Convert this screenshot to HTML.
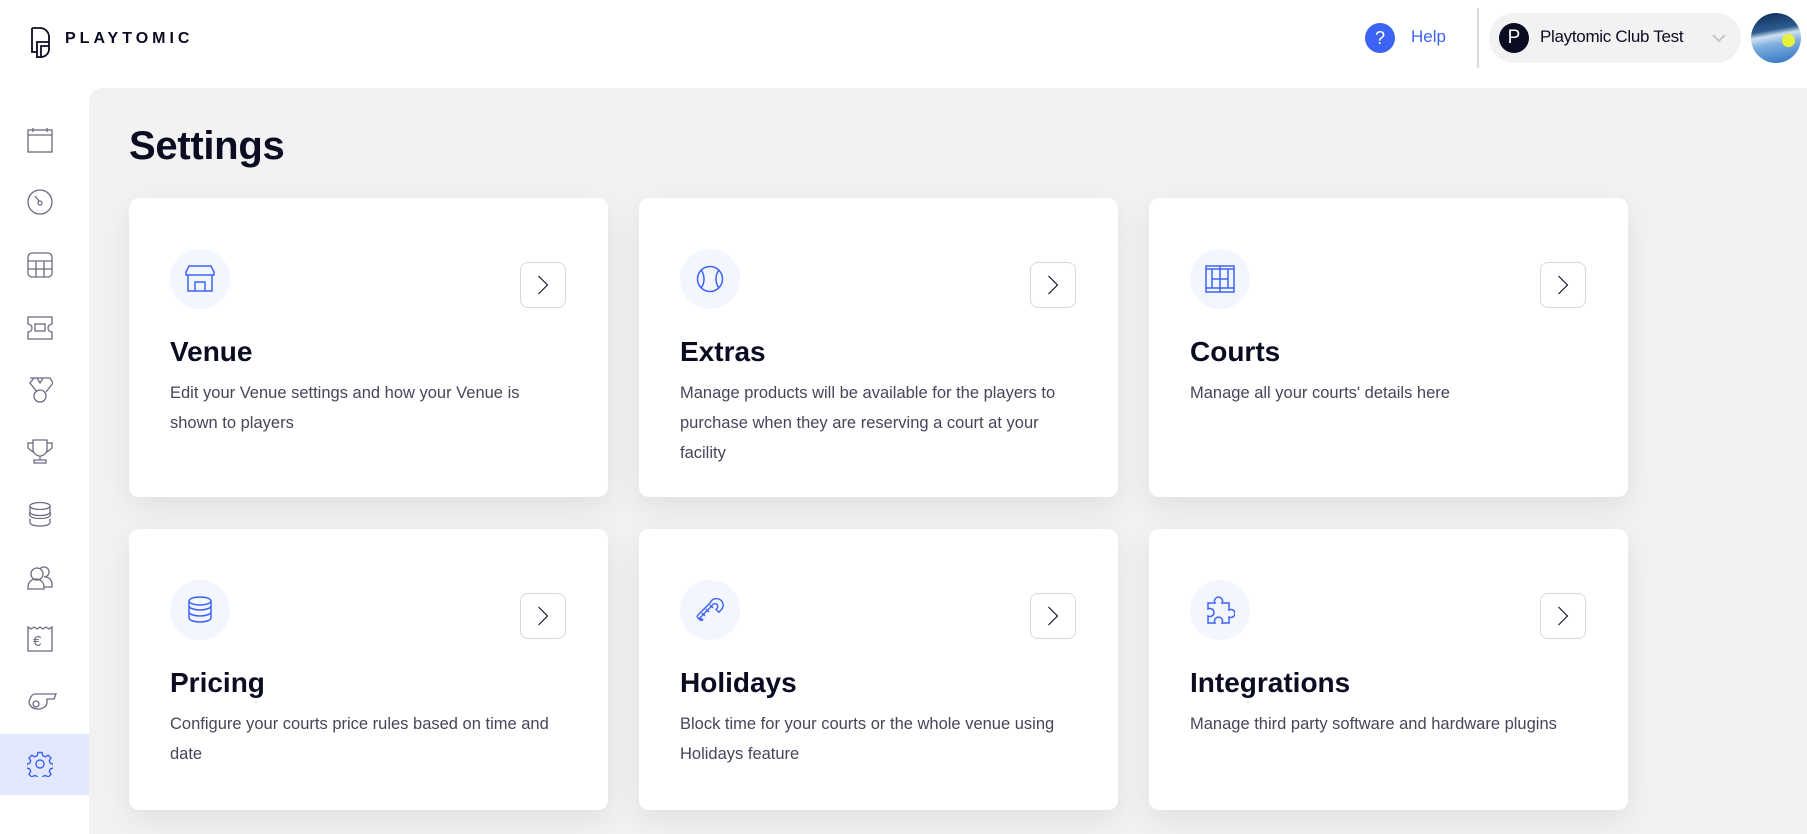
<!DOCTYPE html>
<html><head><meta charset="utf-8"><style>
*{margin:0;padding:0;box-sizing:border-box}
body{width:1807px;height:834px;overflow:hidden;background:#fff;font-family:"Liberation Sans",sans-serif;color:#0b0b22;position:relative}
.abs{position:absolute}
.panel{left:89px;top:88px;right:0;bottom:0;background:#f2f2f2;border-top-left-radius:14px}
h1{position:absolute;left:129px;top:124px;font-size:40px;font-weight:700;letter-spacing:-0.3px}
.card{position:absolute;width:479px;background:#fff;border-radius:10px;box-shadow:0 10px 30px rgba(0,0,0,0.08)}
.ic{position:absolute;left:41px;top:51px;width:60px;height:60px;border-radius:50%;background:#f3f6ff;display:flex;align-items:center;justify-content:center}
.arr{position:absolute;left:391px;top:64px;width:46px;height:46px;border:1px solid #d8d8dc;border-radius:8px;display:flex;align-items:center;justify-content:center}
.card h2{position:absolute;left:41px;top:138px;font-size:28px;font-weight:700}
.card p{position:absolute;left:41px;top:180px;width:400px;font-size:16.5px;line-height:30px;color:#45465a}
.side svg{position:absolute;left:27px}
</style></head><body>
<svg class="abs" style="left:31px;top:27px" width="20" height="32" viewBox="0 0 20 32" fill="none" stroke="#0b0b22" stroke-width="1.8"><path d="M1 1h8a9 9 0 0 1 9 9v12a8 8 0 0 1-8 8H6"/><path d="M1 1v24h5"/><path d="M6 31V15h12"/><path d="M10 31V19h8"/></svg>
<div class="abs" style="left:65px;top:30px;font-size:16px;font-weight:700;letter-spacing:4px">PLAYTOMIC</div>
<div class="abs" style="left:1365px;top:23px;width:30px;height:30px;border-radius:50%;background:#3d63f5;color:#fff;text-align:center;line-height:30px;font-size:18px">?</div>
<div class="abs" style="left:1411px;top:27px;font-size:17px;color:#3d63f5">Help</div>
<div class="abs" style="left:1477px;top:8px;width:2px;height:60px;background:#dcdcdc"></div>
<div class="abs" style="left:1489px;top:13px;width:252px;height:50px;border-radius:25px;background:#f2f2f2"></div>
<div class="abs" style="left:1499px;top:23px;width:30px;height:30px;border-radius:50%;background:#0b0b22;color:#fff;text-align:center;line-height:30px;font-size:19px">P</div>
<div class="abs" style="left:1540px;top:27px;font-size:17px;letter-spacing:-0.3px">Playtomic Club Test</div>
<svg class="abs" style="left:1711px;top:32px" width="16" height="12" viewBox="0 0 16 12"><path d="M2 3l6 6 6-6" fill="none" stroke="#c8c8cc" stroke-width="2"/></svg>
<div class="abs" style="left:1751px;top:13px;width:50px;height:50px;border-radius:50%;background:radial-gradient(circle at 75% 55%,#e8f23a 0 6px,transparent 7px),linear-gradient(170deg,#0d2a55 0%,#2d5d92 35%,#cfe0f0 45%,#7fb0e0 60%,#2d6fc0 100%)"></div>
<div class="side">
<svg style="top:127px" width="26" height="26" viewBox="0 0 26 26" fill="none" stroke="#6b6c80" stroke-width="1.3"><rect x="1" y="3" width="24" height="22"/><path d="M1 8h24M6 1v4M20 1v4"/></svg>
<svg style="top:189px" width="26" height="26" viewBox="0 0 26 26" fill="none" stroke="#6b6c80" stroke-width="1.3"><circle cx="13" cy="13" r="12"/><circle cx="13" cy="14" r="2"/><path d="M12 12l-4-5"/></svg>
<svg style="top:252px" width="26" height="26" viewBox="0 0 26 26" fill="none" stroke="#6b6c80" stroke-width="1.3"><rect x="1" y="1" width="24" height="24" rx="4"/><path d="M1 9h24M1 17h24M9 9v16M17 9v16"/></svg>
<svg style="top:315px" width="26" height="26" viewBox="0 0 26 26" fill="none" stroke="#6b6c80" stroke-width="1.3"><path d="M1 2h24v7a4 4 0 0 0 0 8v7H1v-7a4 4 0 0 0 0-8z"/><rect x="8" y="9" width="10" height="7"/></svg>
<svg style="top:377px" width="26" height="26" viewBox="0 0 26 26" fill="none" stroke="#6b6c80" stroke-width="1.3"><path d="M3 1h20l3 5-7 9M7 1L3 6l7 9M10 1l3 5 3-5"/><circle cx="13" cy="19" r="6"/></svg>
<svg style="top:439px" width="26" height="26" viewBox="0 0 26 26" fill="none" stroke="#6b6c80" stroke-width="1.3"><path d="M6 1h14v9a7 7 0 0 1-14 0zM6 4H1v5l5 4M20 4h5v5l-5 4M13 17v4M7 24h12v-3H7z"/></svg>
<svg style="top:502px" width="26" height="26" viewBox="0 0 26 26" fill="none" stroke="#6b6c80" stroke-width="1.3"><ellipse cx="13" cy="4" rx="10" ry="3.5"/><path d="M3 4v6c0 2 4 3.5 10 3.5S23 12 23 10V4M3 10c0 0-1 2 0 3.5 1 2 5 3 10 3s9-1 10-3c1-1.5 0-3.5 0-3.5M3 16.5v4c0 2 4 3.5 10 3.5s10-1.5 10-3.5v-4"/></svg>
<svg style="top:564px" width="26" height="26" viewBox="0 0 26 26" fill="none" stroke="#6b6c80" stroke-width="1.3"><circle cx="10" cy="10" r="6"/><path d="M1 25v-2a8 8 0 0 1 16 0v2zM13 5a5 5 0 1 1 4 8M19 13a7 7 0 0 1 6 7v3h-8"/></svg>
<svg style="top:626px" width="26" height="26" viewBox="0 0 26 26" fill="none" stroke="#6b6c80" stroke-width="1.3"><path d="M1 25V1l3 2 3-2 3 2 3-2 3 2 3-2 3 2 3-2v24z"/><text x="6" y="20" font-size="15" fill="#6b6c80" stroke="none" font-family="Liberation Sans">€</text></svg>
<svg style="top:688px" width="30" height="26" viewBox="0 0 30 26" fill="none" stroke="#6b6c80" stroke-width="1.3"><path d="M8 6h21l-2 5h-7v4a9 7 0 1 1-17-4c1-3 3-5 5-5z"/><circle cx="9" cy="16" r="3"/></svg>
<div class="abs" style="left:0;top:734px;width:89px;height:61px;background:#e2e8fd"></div>
<svg style="top:751px" width="26" height="26" viewBox="0 0 26 26" fill="none" stroke="#3d63f5" stroke-width="1.4"><circle cx="13" cy="13" r="4"/><path d="M11 1.5h4l.8 3.2 2.6 1.1 2.8-1.7 2.8 2.8-1.7 2.8 1.1 2.6 3.1.8v4l-3.1.8-1.1 2.6 1.7 2.8-2.8 2.8-2.8-1.7-2.6 1.1-.8 3.1h-4l-.8-3.1-2.6-1.1-2.8 1.7-2.8-2.8 1.7-2.8-1.1-2.6-3.1-.8v-4l3.1-.8 1.1-2.6-1.7-2.8 2.8-2.8 2.8 1.7 2.6-1.1z"/></svg>
</div>
<div class="abs panel"></div>
<h1>Settings</h1>

<div class="card" style="left:129px;top:198px;height:299px">
<div class="ic"><svg width="30" height="28" viewBox="0 0 30 28" fill="none" stroke="#3d63f5" stroke-width="1.5"><path d="M4 1h22l3 6v3H1V7zM3 10v16h24V10M10 26v-9h10v9"/></svg></div>
<div class="arr"><svg width="12" height="20" viewBox="0 0 12 20"><path d="M1.5 1l9 9-9 9" fill="none" stroke="#0b0b22" stroke-width="1.1"/></svg></div>
<h2>Venue</h2><p>Edit your Venue settings and how your Venue is shown to players</p></div>

<div class="card" style="left:639px;top:198px;height:299px">
<div class="ic"><svg width="28" height="28" viewBox="0 0 28 28" fill="none" stroke="#3d63f5" stroke-width="1.5"><circle cx="14" cy="14" r="12.5"/><path d="M5 5c4 5 4 13 0 18M23 5c-4 5-4 13 0 18"/></svg></div>
<div class="arr"><svg width="12" height="20" viewBox="0 0 12 20"><path d="M1.5 1l9 9-9 9" fill="none" stroke="#0b0b22" stroke-width="1.1"/></svg></div>
<h2>Extras</h2><p>Manage products will be available for the players to purchase when they are reserving a court at your facility</p></div>

<div class="card" style="left:1149px;top:198px;height:299px">
<div class="ic"><svg width="30" height="28" viewBox="0 0 30 28" fill="none" stroke="#3d63f5" stroke-width="1.5"><rect x="1" y="1" width="28" height="26"/><path d="M1 4h28M1 23h28M7 4v19M23 4v19M15 1v26M7 14h16"/></svg></div>
<div class="arr"><svg width="12" height="20" viewBox="0 0 12 20"><path d="M1.5 1l9 9-9 9" fill="none" stroke="#0b0b22" stroke-width="1.1"/></svg></div>
<h2>Courts</h2><p>Manage all your courts' details here</p></div>

<div class="card" style="left:129px;top:529px;height:281px">
<div class="ic"><svg width="26" height="28" viewBox="0 0 26 28" fill="none" stroke="#3d63f5" stroke-width="1.5"><ellipse cx="13" cy="5" rx="11" ry="4"/><path d="M2 5v5c0 2 5 4 11 4s11-2 11-4V5M2 10v6c0 2 5 4 11 4s11-2 11-4v-6M2 16v6c0 2 5 4 11 4s11-2 11-4v-6"/></svg></div>
<div class="arr"><svg width="12" height="20" viewBox="0 0 12 20"><path d="M1.5 1l9 9-9 9" fill="none" stroke="#0b0b22" stroke-width="1.1"/></svg></div>
<h2>Pricing</h2><p>Configure your courts price rules based on time and date</p></div>

<div class="card" style="left:639px;top:529px;height:281px">
<div class="ic"><svg width="28" height="28" viewBox="0 0 28 28" fill="none" stroke="#3d63f5" stroke-width="1.5"><path d="M3 22l13-13a3 3 0 1 1 5 3l-1 1 3 3 2-2a7 7 0 1 0-11-8L1 19a2 2 0 0 0 0 3l2 2a2 2 0 0 0 3 0z" transform="translate(1 1) scale(0.95)"/><path d="M6 17l3 3M10 13l3 3M14 9l3 3"/></svg></div>
<div class="arr"><svg width="12" height="20" viewBox="0 0 12 20"><path d="M1.5 1l9 9-9 9" fill="none" stroke="#0b0b22" stroke-width="1.1"/></svg></div>
<h2>Holidays</h2><p>Block time for your courts or the whole venue using Holidays feature</p></div>

<div class="card" style="left:1149px;top:529px;height:281px">
<div class="ic"><svg width="30" height="30" viewBox="0 0 30 30" fill="none" stroke="#3d63f5" stroke-width="1.5"><path d="M3 8h7a4 4 0 1 1 7 0h7v7a4 4 0 1 1 0 7v6h-7a4 4 0 1 0-7 0H3v-7a4 4 0 1 0 0-7z"/></svg></div>
<div class="arr"><svg width="12" height="20" viewBox="0 0 12 20"><path d="M1.5 1l9 9-9 9" fill="none" stroke="#0b0b22" stroke-width="1.1"/></svg></div>
<h2>Integrations</h2><p>Manage third party software and hardware plugins</p></div>
</body></html>
